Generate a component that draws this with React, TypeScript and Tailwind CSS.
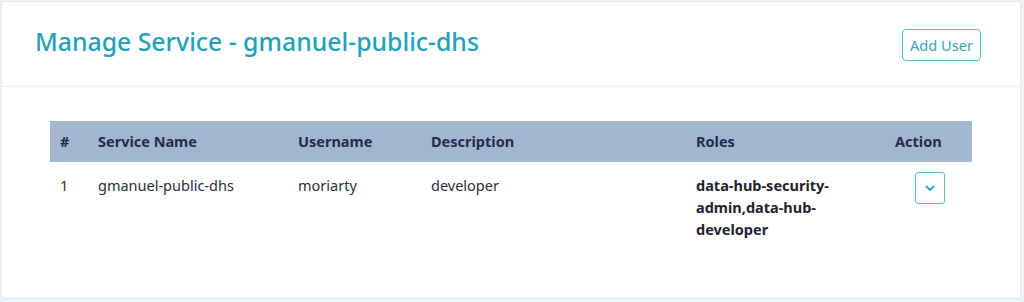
import React from "react";

const font = { fontFamily: '"Noto Sans", "Open Sans", sans-serif' };

export default function App() {
  return (
    <div className="w-[1024px] h-[302px] bg-[#eef2f7] pt-px pl-px" style={font}>
      <div className="w-[1020px] h-[298px] bg-white border border-[#e1e7ef] rounded-[3px]">
        <div className="h-[85px] border-b border-[#e8ecf1] flex items-center justify-between pl-[33px] pr-[39px]">
          <h1 className="text-[24.8px] leading-[30px] font-medium text-[#22a2b7] -mt-[6px]">
            Manage Service - gmanuel-public-dhs
          </h1>
          <button className="h-[32px] px-[7px] mt-[2px] border border-[#5bb9c8] rounded-[4px] text-[14.6px] text-[#3aa6b8] leading-none">
            Add User
          </button>
        </div>
        <div className="pl-[48px] pt-[34px]">
          <table className="w-[922px] border-collapse text-[14.5px] text-left">
            <thead>
              <tr className="bg-[#a2b6cd] h-[41px] text-[#252a52]">
                <th className="w-[38px] pl-[10px] font-bold">#</th>
                <th className="w-[200px] pl-[10px] font-bold">Service Name</th>
                <th className="w-[133px] pl-[10px] font-bold">Username</th>
                <th className="w-[265px] pl-[10px] font-bold">Description</th>
                <th className="w-[199px] pl-[10px] font-bold">Roles</th>
                <th className="pl-[10px] font-bold">Action</th>
              </tr>
            </thead>
            <tbody>
              <tr className="align-top text-[#2b2f3a]">
                <td className="pl-[10px] pt-[12px] leading-[22px]">1</td>
                <td className="pl-[10px] pt-[12px] leading-[22px]">gmanuel-public-dhs</td>
                <td className="pl-[10px] pt-[12px] leading-[22px]">moriarty</td>
                <td className="pl-[10px] pt-[12px] leading-[22px]">developer</td>
                <td className="pl-[10px] pt-[12px] leading-[22px]">
                  <div className="w-[150px] font-bold text-[#1f2330]">
                    data-hub-security-admin,data-hub-developer
                  </div>
                </td>
                <td className="pl-[30px] pt-[10px]">
                  <button className="w-[30px] h-[32px] border border-[#5bb9c8] rounded-[3px] flex items-center justify-center">
                    <svg width="10" height="7" viewBox="0 0 10 7" fill="none">
                      <path d="M1.5 1.5 L5 5 L8.5 1.5" stroke="#2f9fb6" strokeWidth="1.8" strokeLinecap="round" strokeLinejoin="round" />
                    </svg>
                  </button>
                </td>
              </tr>
            </tbody>
          </table>
        </div>
      </div>
    </div>
  );
}
